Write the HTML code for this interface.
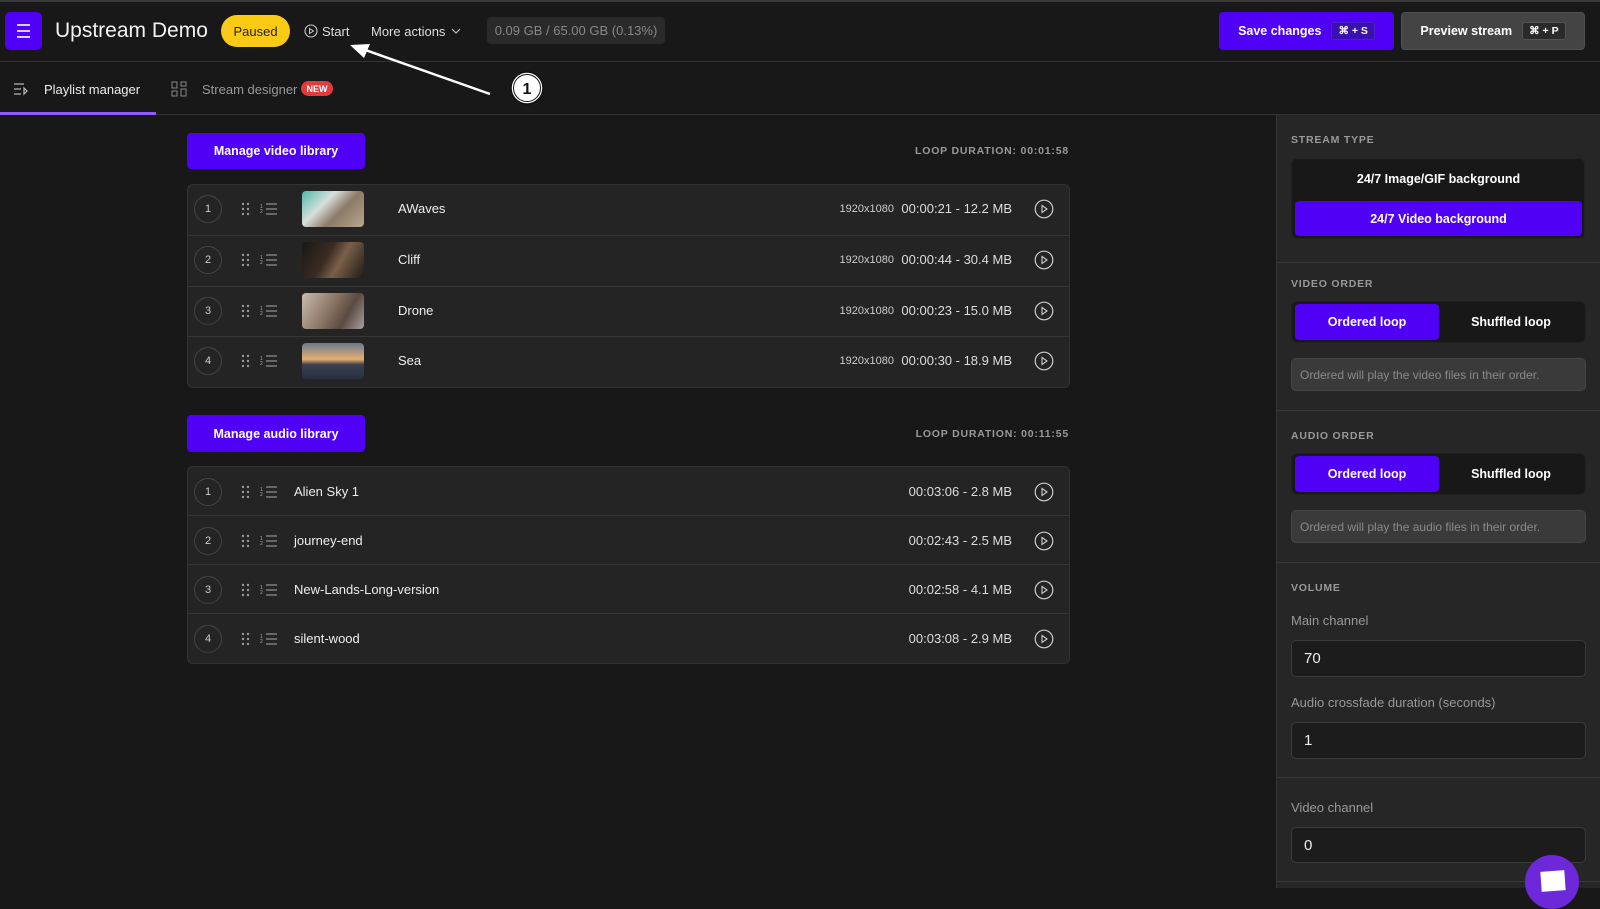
<!DOCTYPE html>
<html><head><meta charset="utf-8"><style>
*{box-sizing:border-box;margin:0;padding:0}
body{width:1600px;height:888px;overflow:hidden;background:#181818;font-family:"Liberation Sans",sans-serif;color:#e8e8e8;position:relative}
.a{position:absolute}
.hdr{left:0;top:0;width:1600px;height:62px;border-top:2px solid #3a3a3a;border-bottom:1px solid #333;background:#181818}
.tabs{left:0;top:62px;width:1600px;height:53px;border-bottom:1px solid #333}
.btn{background:#5000f5;color:#fff;font-weight:bold;font-size:12.5px;border-radius:4px;display:flex;align-items:center;justify-content:center}
.kbd{background:#3a10b0;border:1px solid #4a20c8;border-radius:3px;font-size:10.5px;padding:2px 6px;margin-left:10px}
.box{background:#242424;border:1px solid #333;border-radius:6px}
.row{position:absolute;left:0;right:0;border-bottom:1px solid #363636}
.lbl{font-size:10.5px;font-weight:bold;letter-spacing:0.8px;color:#999}
.panel{left:1276px;top:115px;width:324px;height:773px;background:#262626;border-left:1px solid #333}
.seg{background:#181818;border-radius:6px;border:1px solid #222}
.segb{position:absolute;font-size:12.5px;font-weight:bold;color:#fff;display:flex;align-items:center;justify-content:center;border-radius:4px}
.info{background:#3a3a3a;border:1px solid #444;border-radius:5px;font-size:12px;color:#8a8a8a;padding-left:8px;display:flex;align-items:center}
.inp{background:#1c1c1c;border:1px solid #3a3a3a;border-radius:5px;font-size:15px;color:#eee;padding-left:12px;display:flex;align-items:center}
.flab{font-size:13px;color:#999}
.hr{height:1px;background:#383838;left:1277px;width:323px}
</style></head><body>
<div class="a hdr"></div>
<div class="a" style="left:5px;top:12px;width:37px;height:38px;background:#5000f5;border-radius:5px">
<svg width="37" height="38"><g stroke="#fff" stroke-width="1.6"><line x1="12" y1="13" x2="25" y2="13"/><line x1="12" y1="19" x2="25" y2="19"/><line x1="12" y1="25" x2="25" y2="25"/></g></svg></div>
<div class="a" style="left:55px;top:19px;font-size:21px;color:#f2f2f2">Upstream Demo</div>
<div class="a" style="left:221px;top:15px;width:69px;height:32px;border-radius:16px;background:#fbcb14;color:#222;font-size:13px;display:flex;align-items:center;justify-content:center">Paused</div>
<svg class="a" style="left:304px;top:24px" width="14" height="14"><circle cx="7" cy="7" r="6" fill="none" stroke="#ccc" stroke-width="1.1"/><path d="M5.5 4.5L9.5 7L5.5 9.5Z" fill="none" stroke="#ccc" stroke-width="1"/></svg>
<div class="a" style="left:322px;top:24px;font-size:13px;color:#ddd">Start</div>
<div class="a" style="left:371px;top:24px;font-size:13px;color:#ddd">More actions</div>
<svg class="a" style="left:451px;top:27px" width="10" height="8"><path d="M1 2L5 6L9 2" fill="none" stroke="#bbb" stroke-width="1.2"/></svg>
<div class="a" style="left:487px;top:17px;width:178px;height:27px;background:#2a2a2a;border-radius:4px;font-size:13px;color:#888;display:flex;align-items:center;justify-content:center">0.09 GB / 65.00 GB (0.13%)</div>
<div class="a btn" style="left:1219px;top:12px;width:175px;height:38px">Save changes<span class="kbd">⌘ + S</span></div>
<div class="a btn" style="left:1401px;top:12px;width:184px;height:38px;background:#444;border:1px solid #505050">Preview stream<span class="kbd" style="background:#2a2a2a;border-color:#555">⌘ + P</span></div>

<div class="a tabs"></div>
<svg class="a" style="left:13px;top:82px" width="16" height="14"><g stroke="#bbb" stroke-width="1.2" fill="none"><line x1="1" y1="2" x2="11" y2="2"/><line x1="1" y1="7" x2="8" y2="7"/><line x1="1" y1="12" x2="8" y2="12"/><path d="M11 6L14 9L11 12Z"/></g></svg>
<div class="a" style="left:44px;top:82px;font-size:13px;color:#eee">Playlist manager</div>
<div class="a" style="left:0;top:112px;width:156px;height:3px;background:#8b5cf6"></div>
<svg class="a" style="left:171px;top:81px" width="16" height="16"><g fill="none" stroke="#888" stroke-width="1"><rect x="1" y="1" width="5" height="6"/><rect x="10" y="1" width="5" height="4"/><rect x="1" y="10" width="5" height="5"/><rect x="10" y="8" width="5" height="7"/></g></svg>
<div class="a" style="left:202px;top:82px;font-size:13px;color:#999">Stream designer</div>
<div class="a" style="left:301px;top:81px;width:32px;height:15px;border-radius:8px;background:#e23b3b;color:#fff;font-size:9px;font-weight:bold;display:flex;align-items:center;justify-content:center">NEW</div>
<svg class="a" style="left:340px;top:36px" width="210" height="80"><line x1="150" y1="58" x2="14" y2="10" stroke="#fff" stroke-width="2.5"/><path d="M10 9L30 8L24 22Z" fill="#fff"/><circle cx="187" cy="52" r="16" fill="#fff" stroke="#111" stroke-width="1.5"/><circle cx="187" cy="52" r="13.5" fill="none" stroke="#111" stroke-width="1"/><text x="187" y="58" text-anchor="middle" font-size="16" font-weight="bold" fill="#111" font-family="Liberation Sans">1</text></svg>

<div class="a btn" style="left:187px;top:133px;width:178px;height:36px">Manage video library</div>
<div class="a lbl" style="left:860px;width:209px;text-align:right;top:145px">LOOP DURATION: 00:01:58</div>
<div class="a box" style="left:187px;top:184px;width:883px;height:204px">
<div class="row" style="top:0;height:51px"></div><div class="row" style="top:51px;height:51px"></div><div class="row" style="top:102px;height:50px"></div>
</div>

<div class="a box" style="left:187px;top:466px;width:883px;height:198px">
<div class="row" style="top:0;height:49px"></div><div class="row" style="top:49px;height:49px"></div><div class="row" style="top:98px;height:49px"></div>
</div>

<div id="rows"></div>
<script>
var V=[["1","AWaves","00:00:21 - 12.2 MB",209,"linear-gradient(135deg,#4fb8a8 0%,#d8e0dc 35%,#8a7a66 60%,#b8a890 100%)"],
["2","Cliff","00:00:44 - 30.4 MB",260,"linear-gradient(120deg,#1a1614 0%,#3a2c24 40%,#7a6048 60%,#201a18 100%)"],
["3","Drone","00:00:23 - 15.0 MB",311,"linear-gradient(120deg,#c8bcb0 0%,#8a7464 45%,#5a4a40 70%,#a8a0a0 100%)"],
["4","Sea","00:00:30 - 18.9 MB",361,"linear-gradient(180deg,#6a7890 0%,#e8b070 45%,#3a4050 60%,#283040 100%)"]];
var A=[["1","Alien Sky 1","00:03:06 - 2.8 MB",492],["2","journey-end","00:02:43 - 2.5 MB",541],["3","New-Lands-Long-version","00:02:58 - 4.1 MB",590],["4","silent-wood","00:03:08 - 2.9 MB",639]];
var h="";
function common(n,y){
 return '<div class="a" style="left:194px;top:'+(y-14)+'px;width:28px;height:28px;border:1px solid #444;border-radius:50%;font-size:11px;display:flex;align-items:center;justify-content:center;color:#ccc">'+n+'</div>'+
 '<svg class="a" style="left:241px;top:'+(y-7)+'px" width="10" height="14" fill="#999"><circle cx="2" cy="2" r="1.2"/><circle cx="7" cy="2" r="1.2"/><circle cx="2" cy="7" r="1.2"/><circle cx="7" cy="7" r="1.2"/><circle cx="2" cy="12" r="1.2"/><circle cx="7" cy="12" r="1.2"/></svg>'+
 '<svg class="a" style="left:260px;top:'+(y-7)+'px" width="18" height="14"><g stroke="#aaa" stroke-width="1"><line x1="6" y1="2" x2="17" y2="2"/><line x1="6" y1="7" x2="17" y2="7"/><line x1="6" y1="12" x2="17" y2="12"/></g><text x="0" y="6" font-size="5" fill="#aaa">1</text><text x="0" y="11" font-size="5" fill="#aaa">2</text></svg>'+
 '<svg class="a" style="left:1034px;top:'+(y-10)+'px" width="20" height="20"><circle cx="10" cy="10" r="8.8" fill="none" stroke="#ccc" stroke-width="1.2"/><path d="M8 6.5L13 10L8 13.5Z" fill="none" stroke="#ccc" stroke-width="1.1"/></svg>';
}
V.forEach(function(r){var y=r[3];h+=common(r[0],y)+
 '<div class="a" style="left:302px;top:'+(y-18)+'px;width:62px;height:36px;border-radius:4px;background:'+r[4]+'"></div>'+
 '<div class="a" style="left:398px;top:'+(y-8)+'px;font-size:13px;color:#eee">'+r[1]+'</div>'+
 '<div class="a" style="left:780px;width:114px;text-align:right;top:'+(y-6)+'px;font-size:11px;color:#ccc">1920x1080</div>'+
 '<div class="a" style="left:860px;width:152px;text-align:right;top:'+(y-8)+'px;font-size:13px;color:#ddd">'+r[2]+'</div>';});
A.forEach(function(r){var y=r[3];h+=common(r[0],y)+
 '<div class="a" style="left:294px;top:'+(y-8)+'px;font-size:13px;color:#eee">'+r[1]+'</div>'+
 '<div class="a" style="left:860px;width:152px;text-align:right;top:'+(y-8)+'px;font-size:13px;color:#ddd">'+r[2]+'</div>';});
document.getElementById("rows").innerHTML=h;
</script>

<div class="a btn" style="left:187px;top:415px;width:178px;height:37px">Manage audio library</div>
<div class="a lbl" style="left:860px;width:209px;text-align:right;top:428px">LOOP DURATION: 00:11:55</div>

<div class="a panel"></div>
<div class="a lbl" style="left:1291px;top:134px">STREAM TYPE</div>
<div class="a seg" style="left:1291px;top:158px;width:294px;height:81px"></div>
<div class="a segb" style="left:1295px;top:164px;width:287px;height:30px">24/7 Image/GIF background</div>
<div class="a segb" style="left:1295px;top:201px;width:287px;height:35px;background:#5000f5">24/7 Video background</div>
<div class="a hr" style="top:262px"></div>

<div class="a lbl" style="left:1291px;top:278px">VIDEO ORDER</div>
<div class="a seg" style="left:1291px;top:301px;width:295px;height:42px"></div>
<div class="a segb" style="left:1295px;top:304px;width:144px;height:36px;background:#5000f5">Ordered loop</div>
<div class="a segb" style="left:1440px;top:304px;width:142px;height:36px">Shuffled loop</div>
<div class="a info" style="left:1291px;top:358px;width:295px;height:33px">Ordered will play the video files in their order.</div>
<div class="a hr" style="top:410px"></div>

<div class="a lbl" style="left:1291px;top:430px">AUDIO ORDER</div>
<div class="a seg" style="left:1291px;top:453px;width:295px;height:42px"></div>
<div class="a segb" style="left:1295px;top:456px;width:144px;height:36px;background:#5000f5">Ordered loop</div>
<div class="a segb" style="left:1440px;top:456px;width:142px;height:36px">Shuffled loop</div>
<div class="a info" style="left:1291px;top:510px;width:295px;height:33px">Ordered will play the audio files in their order.</div>
<div class="a hr" style="top:562px"></div>

<div class="a lbl" style="left:1291px;top:582px">VOLUME</div>
<div class="a flab" style="left:1291px;top:613px">Main channel</div>
<div class="a inp" style="left:1291px;top:640px;width:295px;height:37px">70</div>
<div class="a flab" style="left:1291px;top:695px">Audio crossfade duration (seconds)</div>
<div class="a inp" style="left:1291px;top:722px;width:295px;height:37px">1</div>
<div class="a hr" style="top:777px"></div>
<div class="a flab" style="left:1291px;top:800px">Video channel</div>
<div class="a inp" style="left:1291px;top:827px;width:295px;height:36px">0</div>
<div class="a hr" style="top:881px"></div>
<div class="a" style="left:1525px;top:855px;width:54px;height:54px;border-radius:50%;background:#6d28d9"></div>
<div class="a" style="left:1541px;top:871px;width:24px;height:20px;background:#fff;transform:rotate(-4deg)"></div>
</body></html>
